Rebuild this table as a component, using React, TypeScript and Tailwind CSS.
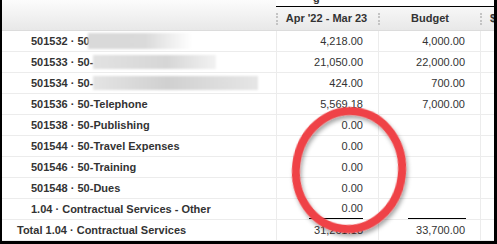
import React from "react";

type Row = {
  label: string;
  blur?: { w: number; h: number; ml: string; bg: string };
  a?: string;
  b?: string;
  underline?: boolean;
  total?: boolean;
};

const rows: Row[] = [
  {
    label: "501532 · 50",
    blur: { w: 104, h: 16, ml: "ml-[-2px]", bg: "bg-[linear-gradient(90deg,#d9d9d9_0%,#dadada_55%,#ffffff_100%)]" },
    a: "4,218.00",
    b: "4,000.00",
  },
  {
    label: "501533 · 50-",
    blur: { w: 123, h: 14, ml: "ml-0", bg: "bg-[linear-gradient(90deg,#e2e2e2_0%,#d6d6d6_60%,#f2f2f2_100%)]" },
    a: "21,050.00",
    b: "22,000.00",
  },
  {
    label: "501534 · 50-",
    blur: { w: 165, h: 14, ml: "ml-0", bg: "bg-[linear-gradient(90deg,#e4e4e4_0%,#d0d0d0_45%,#e6e6e6_100%)]" },
    a: "424.00",
    b: "700.00",
  },
  { label: "501536 · 50-Telephone", a: "5,569.18", b: "7,000.00" },
  { label: "501538 · 50-Publishing", a: "0.00" },
  { label: "501544 · 50-Travel Expenses", a: "0.00" },
  { label: "501546 · 50-Training", a: "0.00" },
  { label: "501548 · 50-Dues", a: "0.00" },
  { label: "1.04 · Contractual Services - Other", a: "0.00", underline: true },
  { label: "Total 1.04 · Contractual Services", a: "31,261.18", b: "33,700.00", total: true },
];

function Sep() {
  return <div className="h-[12px] w-0 shrink-0 border-l-2 border-dotted border-[#c4c4c4]" />;
}

export default function App() {
  return (
    <div className="w-[497px] h-[244px] bg-black pl-[2px] pr-[3px] pb-[3px] overflow-hidden">
      <div className="relative h-[241px] bg-white overflow-hidden font-['Liberation_Sans',Arial,sans-serif] text-[11px] text-[#333]">
        {/* header */}
        <div className="flex h-[31px] border-b border-[#dcdcdc]">
          <div className="w-[274px] shrink-0 bg-gradient-to-b from-[#fcfcfc] to-[#e8e8e8]" />
          <div className="flex-1 min-w-0 flex flex-col">
            <div className="h-[6px] bg-white relative overflow-hidden">
              <span className="absolute left-[37px] top-[-10px] font-bold text-[11px] text-[#333]">g</span>
            </div>
            <div className="h-px bg-black" />
            <div className="flex-1 flex items-center bg-gradient-to-b from-[#f7f7f7] to-[#e8e8e8] font-bold">
              <div className="w-[102px] shrink-0 flex items-center">
                <Sep />
                <span className="flex-1 text-center pr-[3px] whitespace-nowrap">Apr '22 - Mar 23</span>
              </div>
              <div className="w-[102px] shrink-0 flex items-center">
                <Sep />
                <span className="flex-1 text-center">Budget</span>
              </div>
              <div className="flex-1 min-w-0 flex items-center overflow-hidden whitespace-nowrap">
                <Sep />
                <span className="pl-[8px]">$</span>
              </div>
            </div>
          </div>
        </div>

        {/* body */}
        {rows.map((r) => (
          <div key={r.label} className="flex h-[21px] border-b border-[#ececec]">
            <div
              className={`w-[274px] shrink-0 flex items-center whitespace-nowrap overflow-hidden font-bold ${
                r.total ? "pl-[15px]" : "pl-[29px]"
              }`}
            >
              <span>{r.label}</span>
              {r.blur && (
                <span
                  className={`inline-block shrink-0 blur-[1px] ${r.blur.ml} ${r.blur.bg}`}
                  style={{ width: r.blur.w, height: r.blur.h }}
                />
              )}
            </div>
            <div className="w-[102px] shrink-0 border-l border-[#ececec] flex flex-col">
              <div className="flex-1 flex items-center justify-end pr-[15px]">{r.a}</div>
              {r.underline && <div className="h-px w-[54px] self-end mr-[15px] bg-black" />}
            </div>
            <div className="w-[102px] shrink-0 border-l border-[#ececec] flex flex-col">
              <div className="flex-1 flex items-center justify-end pr-[15px]">{r.b}</div>
              {r.underline && <div className="h-px w-[58px] self-end mr-[14px] bg-black" />}
            </div>
            <div className="flex-1 min-w-0 border-l border-[#ececec]" />
          </div>
        ))}

        {/* red annotation circle */}
        <svg className="absolute inset-0 pointer-events-none" width="492" height="241" viewBox="0 0 492 241">
          <defs>
            <filter id="ringShadow" x="-20%" y="-20%" width="140%" height="140%">
              <feDropShadow dx="2" dy="3" stdDeviation="2" floodColor="#000" floodOpacity="0.35" />
            </filter>
          </defs>
          <ellipse
            cx="347"
            cy="170"
            rx="53"
            ry="59"
            fill="none"
            stroke="#ef4246"
            strokeWidth="8"
            transform="rotate(7 347 170)"
            filter="url(#ringShadow)"
          />
        </svg>
      </div>
    </div>
  );
}
